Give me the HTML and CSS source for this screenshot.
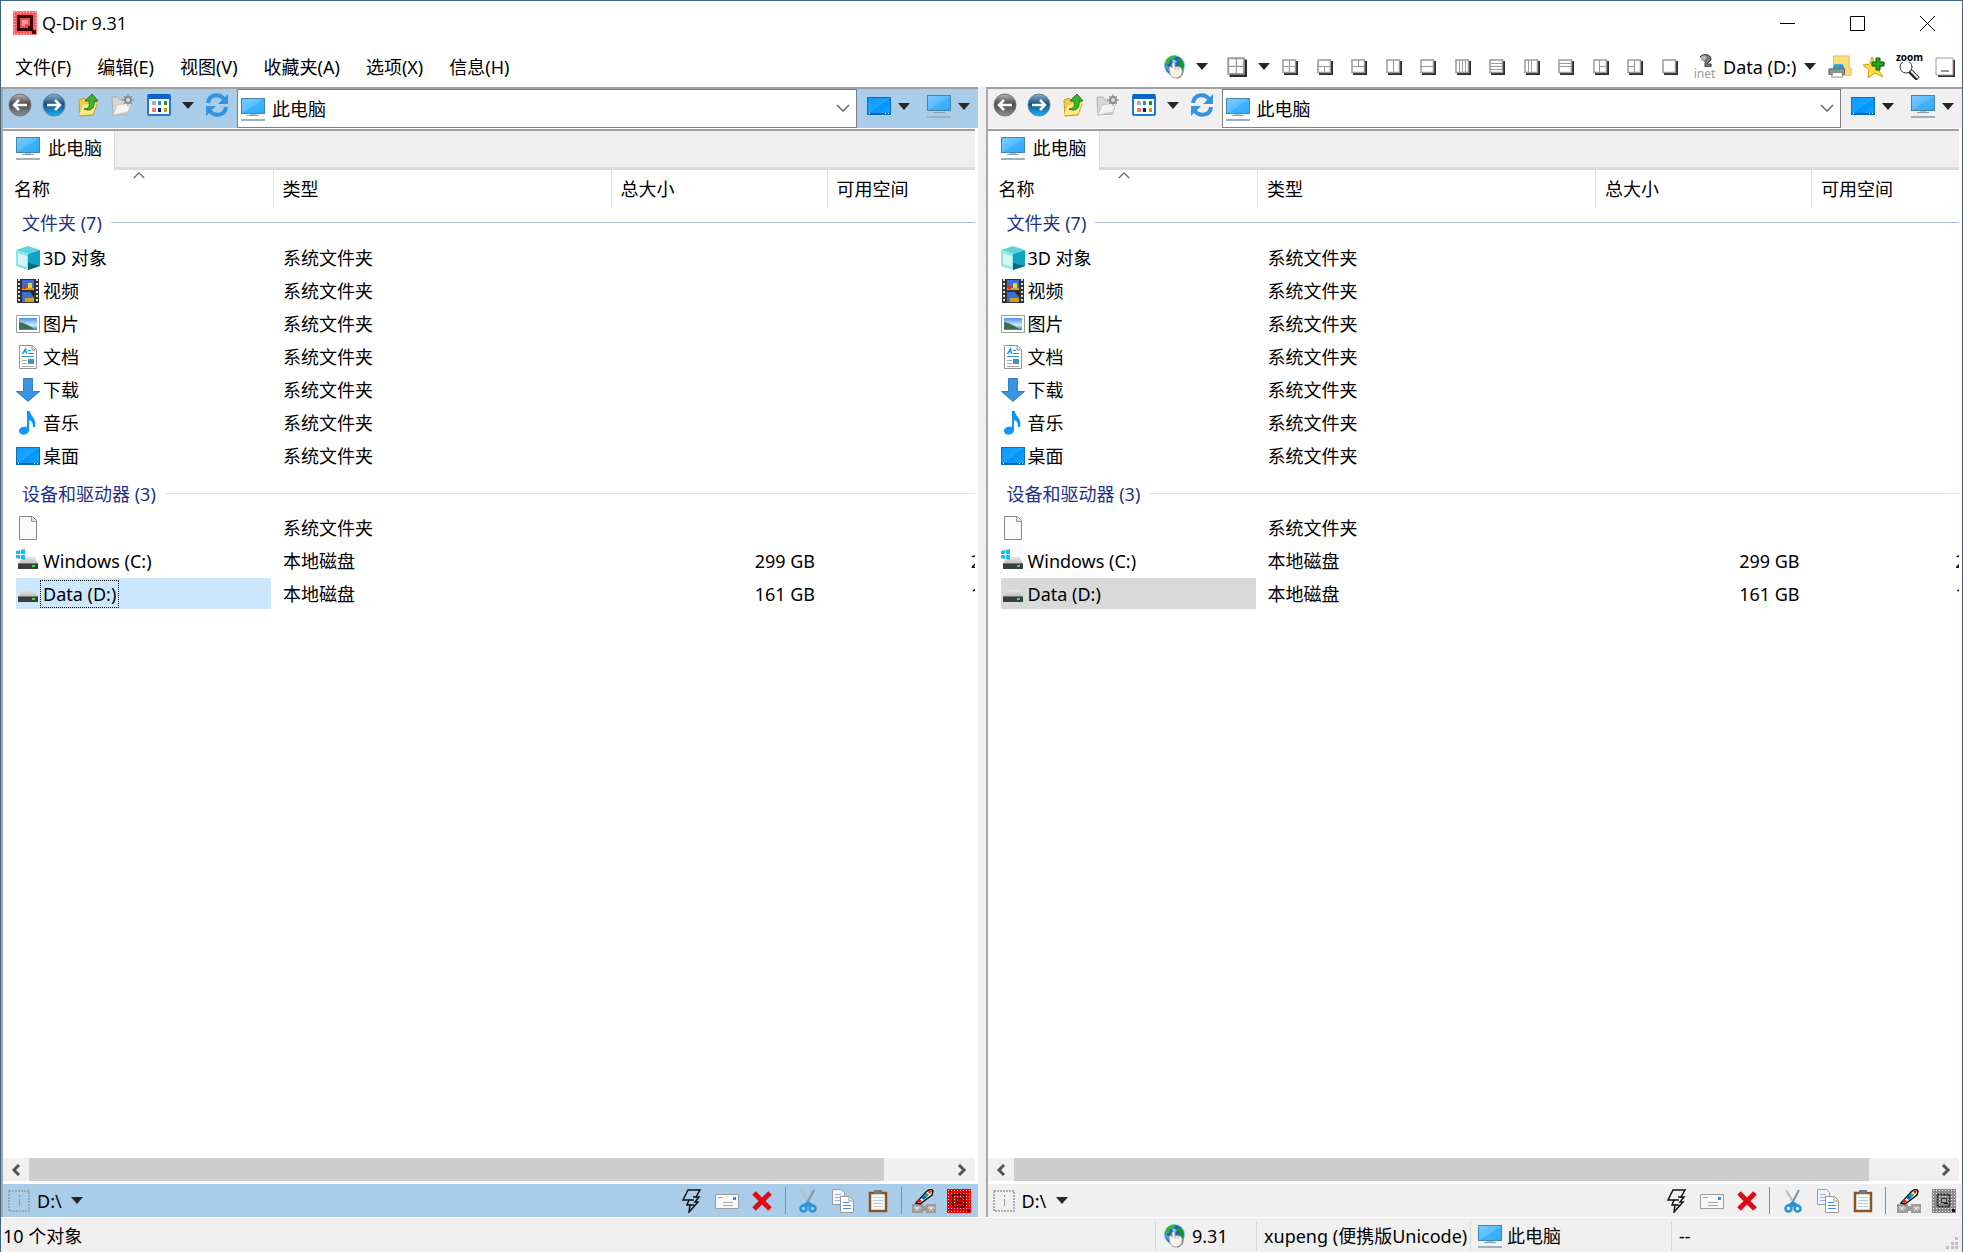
FILE: index.html
```html
<!DOCTYPE html>
<html lang="zh-CN">
<head>
    <meta charset="UTF-8">
    <meta name="viewport" content="width=device-width, initial-scale=1.0">
    <title>Q-Dir 9.31</title>
    <link rel="stylesheet" href="styles.css">
</head>
<body>
    <svg class="sprite" aria-hidden="true">
        <defs>
            <linearGradient id="gScreen" x1="0" y1="0" x2="1" y2="1">
                <stop offset="0" stop-color="#7ccbff"/><stop offset=".5" stop-color="#58bdff"/><stop offset=".52" stop-color="#3fb2ff"/><stop offset="1" stop-color="#2fa9fb"/>
            </linearGradient>
            <linearGradient id="gDesk" x1="0" y1="0" x2="1" y2="1">
                <stop offset="0" stop-color="#0a9bff"/><stop offset=".5" stop-color="#1aa3ff"/><stop offset=".52" stop-color="#0094fb"/><stop offset="1" stop-color="#1ba3ff"/>
            </linearGradient>
            <linearGradient id="gGrey" x1="0" y1="0" x2="0" y2="1">
                <stop offset="0" stop-color="#b5b5b5"/><stop offset=".45" stop-color="#4d4d4d"/><stop offset="1" stop-color="#8e8e8e"/>
            </linearGradient>
            <linearGradient id="gBlue" x1="0" y1="0" x2="0" y2="1">
                <stop offset="0" stop-color="#8fb3cf"/><stop offset=".45" stop-color="#17507c"/><stop offset="1" stop-color="#12b4ff"/>
            </linearGradient>
            <linearGradient id="gDrive" x1="0" y1="0" x2="0" y2="1">
                <stop offset="0" stop-color="#e6e6e6"/><stop offset="1" stop-color="#bdbdbd"/>
            </linearGradient>
            <linearGradient id="gSky" x1="0" y1="0" x2="0" y2="1">
                <stop offset="0" stop-color="#4c92e6"/><stop offset=".6" stop-color="#d4ecf8"/><stop offset="1" stop-color="#3a78a8"/>
            </linearGradient>
            <pattern id="pRed" width="3" height="3" patternUnits="userSpaceOnUse">
                <rect width="3" height="3" fill="#f00000"/><rect x="1" y="1" width="1" height="1" fill="#ffd0d0"/>
            </pattern>
            <pattern id="pPink" width="3" height="3" patternUnits="userSpaceOnUse">
                <rect width="3" height="3" fill="#ff5656"/><rect x="1" y="1" width="1" height="1" fill="#ffc4c4"/>
            </pattern>
            <pattern id="pGrey" width="3" height="3" patternUnits="userSpaceOnUse">
                <rect width="3" height="3" fill="#8c8c8c"/><rect x="1" y="1" width="1" height="1" fill="#eeeeee"/>
            </pattern>
        </defs>
        <symbol id="logo" viewBox="0 0 24 24">
            <rect x=".5" y=".5" width="23" height="23" fill="url(#pPink)" stroke="#f08080"/>
            <path d="M4 4h16v16H4z" fill="#3a0000"/><path d="M7 7h10v8h-2v2H7z" fill="#e85050"/><path d="M9 9h6v4h-3v2H9z" fill="#ff9a9a"/>
            <path d="M19 19h4v4h-4z" fill="#4a0000"/>
        </symbol>
        <symbol id="qred" viewBox="0 0 24 24">
            <rect x=".5" y=".5" width="23" height="23" fill="url(#pRed)" stroke="#f00000"/>
            <path d="M5.500 5.500h12v12h-12z" fill="none" stroke="#200000" stroke-width="2" stroke-dasharray="2 1"/>
            <path d="M9.500 9.500h5v4h-5z" fill="#f00000" stroke="#400000"/><path d="M12 14h4v1h-4zM20 20h3v3h-3z" fill="#400000"/>
        </symbol>
        <symbol id="qgrey" viewBox="0 0 24 24">
            <rect x=".5" y=".5" width="23" height="23" fill="url(#pGrey)" stroke="#888"/>
            <path d="M5.500 5.500h12v12h-12z" fill="none" stroke="#222" stroke-width="2" stroke-dasharray="2 1"/>
            <path d="M9.500 9.500h5v4h-5z" fill="#aaa" stroke="#333"/><path d="M12 14h4v1h-4zM20 20h3v3h-3z" fill="#111"/>
        </symbol>
        <symbol id="back" viewBox="0 0 24 24">
            <circle cx="12" cy="12" r="11" fill="url(#gGrey)" stroke="#777"/><path d="M11 7 6 12l5 5M7 12h12" fill="none" stroke="#fff" stroke-width="2.500"/>
        </symbol>
        <symbol id="forward" viewBox="0 0 24 24">
            <circle cx="12" cy="12" r="11" fill="url(#gBlue)" stroke="#5783a5"/><path d="m13 7 5 5-5 5M17 12H5" fill="none" stroke="#fff" stroke-width="2.500"/>
        </symbol>
        <symbol id="up" viewBox="0 0 24 24">
            <path d="M3 7 8 5l2 2 9 1 2 3-4 11-13 1z" fill="#f0cc4c" stroke="#c99a1e"/><path d="m3 22 4-10 14-2-4 11z" fill="#ffe88a"/>
            <path d="M8 16c5 0 6-3 5-8H9l7-7 6 7h-4c1 7-3 11-10 8z" fill="#3cb52c" stroke="#1c7d16"/>
        </symbol>
        <symbol id="newfolder" viewBox="0 0 24 24">
            <path d="M2 4h6l2 3h8v14L3 22z" fill="#d6d6d6" stroke="#b0b0b0"/><path d="m3 22 4-10 14-2-3 9z" fill="#f4f4f4" stroke="#cacaca"/>
            <circle cx="18" cy="7" r="3" fill="#ddd" stroke="#888" stroke-width="2"/><path d="M18 1v3M18 10v3M12 7h3M21 7h3M14 3l2 2M20 9l2 2M22 3l-2 2M16 9l-2 2" stroke="#888"/>
        </symbol>
        <symbol id="views" viewBox="0 0 24 24">
            <rect x="1" y="2" width="22" height="20" rx="1" fill="#fff" stroke="#1f78dc" stroke-width="2"/><path d="M1 1h22v5H1z" fill="#0a63cf"/>
            <path d="M5 8h4v4H5z" fill="#b3a5c4"/><path d="M11 8h3v4h-3z" fill="#2c8ae0"/><path d="M17 8h3v4h-3z" fill="#119a11"/><path d="M5 15h4v4H5z" fill="#ff7a5c"/><path d="M11 15h3v4h-3z" fill="#001d8a"/><path d="M17 15h3v4h-3z" fill="#d39a00"/>
        </symbol>
        <symbol id="refresh" viewBox="0 0 24 24">
            <path d="M3 10C4 1 15 0 19 6M21 14C20 23 9 24 5 18" fill="none" stroke="#3494e0" stroke-width="4"/><path d="M23 1v10H13zM1 23V13h10z" fill="#3494e0"/>
        </symbol>
        <symbol id="pc" viewBox="0 0 24 24">
            <rect x=".5" y="1.500" width="23" height="15" fill="url(#gScreen)" stroke="#4685a8"/><path d="M9 17h6v1H9z" fill="#b4c4cf"/><path d="M6 18h12v1H6z" fill="#8b9daa"/><path d="M0 22h24v2H0z" fill="#9fb1be"/>
        </symbol>
        <symbol id="desktop" viewBox="0 0 24 24">
            <rect x=".5" y="3.500" width="23" height="17" fill="url(#gDesk)" stroke="#0b6fb8"/><path d="M1 19h22v1H1z" fill="#075c9e"/><path d="M2 19h1v1H2zM18 19h1v1h-1zM21 19h1v1h-1z" fill="#fff"/>
        </symbol>
        <symbol id="globe" viewBox="0 0 24 24">
            <circle cx="11.500" cy="10.500" r="10" fill="#1c5fb4" stroke="#8cc4e8"/><path d="M3 5c2-3 6-5 10-4l-2 3-4 1-1 4-3 1z" fill="#35b83a"/><path d="M14 3c4 0 7 4 7 8l-2 4-3-3 1-4-3-2z" fill="#169a2c"/><path d="M2 10c3 0 4 2 4 6-2-1-4-3-4-6z" fill="#3f9ff0"/><path d="M9 5c2-1 4 0 5 2l-4 2z" fill="#7cc8f4"/>
            <path d="M6 13c0-2 3-2 3 0V9c0-2 3-2 3 0v3c3-1 6 0 7 2 1 5-2 9-6 9-5 0-7-4-7-10z" fill="#f8f3ef" stroke="#9a9a9a"/><path d="M20 14c1 5-2 9-6 9" fill="none" stroke="#777"/><path d="M12 12v3M15 12v3" stroke="#bbb"/>
        </symbol>
        <symbol id="caret" viewBox="0 0 12 7"><path d="M0 0h12L6 7z" fill="#262626"/></symbol>
        <symbol id="chev" viewBox="0 0 14 9"><path d="m1 1 6 6 6-6" fill="none" stroke="#666" stroke-width="1.500"/></symbol>

        <symbol id="box" viewBox="0 0 16 16"><path d="M2 2h14v14H2z" fill="#2c2c2c"/><path d="M1 1h12.500v12.500H1z" fill="#fff" stroke="#9a9a9a" stroke-width="1.500"/></symbol>
        <symbol id="quad" viewBox="0 0 16 16"><use href="#box"/><path d="M7.500 1v13M1 7.500h13" stroke="#9a9a9a"/></symbol>
        <symbol id="l2" viewBox="0 0 16 16"><use href="#box"/><path d="M7.500 8v6M1 7.500h13" stroke="#9a9a9a"/></symbol>
        <symbol id="l3" viewBox="0 0 16 16"><use href="#box"/><path d="M7.500 1v6M1 7.500h13" stroke="#9a9a9a"/></symbol>
        <symbol id="l4" viewBox="0 0 16 16"><use href="#box"/><path d="M7.500 1v13" stroke="#9a9a9a"/></symbol>
        <symbol id="l5" viewBox="0 0 16 16"><use href="#box"/><path d="M1 7.500h13" stroke="#9a9a9a"/></symbol>
        <symbol id="l6" viewBox="0 0 16 16"><use href="#box"/><path d="M4.500 1v13M7.500 1v13M10.500 1v13" stroke="#9a9a9a"/></symbol>
        <symbol id="l7" viewBox="0 0 16 16"><use href="#box"/><path d="M1 4.500h13M1 7.500h13M1 10.500h13" stroke="#9a9a9a"/></symbol>
        <symbol id="l8" viewBox="0 0 16 16"><use href="#box"/><path d="M4.500 1v13M7.500 1v13" stroke="#9a9a9a"/></symbol>
        <symbol id="l9" viewBox="0 0 16 16"><use href="#box"/><path d="M1 4.500h13M1 7.500h13" stroke="#9a9a9a"/></symbol>
        <symbol id="l10" viewBox="0 0 16 16"><use href="#box"/><path d="M6.500 1v13M7 7.500h7" stroke="#9a9a9a"/></symbol>
        <symbol id="l11" viewBox="0 0 16 16"><use href="#box"/><path d="M7.500 1v13M1 7.500h6" stroke="#9a9a9a"/></symbol>

        <symbol id="printer" viewBox="0 0 26 24">
            <path d="M6 0h17v13h2v8h-9L6 15z" fill="#fbdc7a" stroke="#e2bd4e"/><path d="M7 9h9l2 5H5z" fill="#2b8cff"/><path d="M8 10h4v4H7z" fill="#18c37a"/>
            <path d="M1 14h17v6H1z" fill="#8f9699" stroke="#5f6466"/><path d="M5 18h10l1 5H4z" fill="#fff" stroke="#888"/>
        </symbol>
        <symbol id="star" viewBox="0 0 24 24">
            <path d="m9 2 3 7 10-1-7 6 5 8-8-4-7 5 1-8-6-5 7-1z" fill="#ffdd3c" stroke="#d29b16"/><path d="M13 3h4v4h4v4h-4v4h-4v-4H9V7h4z" fill="#25a51d" stroke="#0d5f0c"/>
        </symbol>
        <symbol id="minbox" viewBox="0 0 20 20"><path d="M3 3h17v17H3z" fill="#333"/><path d="M1 1h17v17H1z" fill="#fff" stroke="#9a9a9a"/><path d="M6 13h8v2H6z" fill="#999"/></symbol>

        <symbol id="cube" viewBox="0 0 24 24">
            <path d="m12 0 12 4-12 4L0 4z" fill="#5ed3dc"/><path d="m0 4 12 4v16L0 20z" fill="#8fe5e6"/><path d="m2 7 9 3v11l-9-3z" fill="#d2f6f4"/><path d="m24 4-12 4v16l12-4z" fill="#0fa3c4"/><path d="m12 17 12 3-12 4z" fill="#066878"/>
        </symbol>
        <symbol id="video" viewBox="0 0 24 24">
            <path d="M1 0h22v24H1z" fill="#333"/><path d="M3 0v24M21 0v24" stroke="#ddd" stroke-width="2" stroke-dasharray="2 2"/><path d="M6 1h12v10H6zM6 13h12v10H6z" fill="#3c6ed4"/>
            <path d="M6 9h12v2H6zM9 19h9v4H9z" fill="#d4a017"/><path d="M12 4h4v5h-4z" fill="#f2d21b"/><path d="M7 7h3v3H7z" fill="#c83232"/><path d="M14 13h4v5z" fill="#222"/>
        </symbol>
        <symbol id="picture" viewBox="0 0 24 24">
            <path d="M.5 3.500h23v17H.5z" fill="#fff" stroke="#9c9c9c"/><path d="M3 6h18v12H3z" fill="url(#gSky)"/><path d="M3 10c6 1 11 4 15 7H3z" fill="#3c7050"/>
        </symbol>
        <symbol id="doc" viewBox="0 0 24 24">
            <path d="M3.500.5h13l4 4v19h-17z" fill="#fff" stroke="#949494"/><path d="M16 1v4h4" fill="#ddd" stroke="#949494"/><path d="m6.500 9 3-5 1 5" fill="none" stroke="#2197dc" stroke-width="1.500"/><path d="M12 5.500h3M12 8.500h6M6 11.500h12" stroke="#2197dc"/><path d="M6 15.500h5M6 18.500h5M6 21.500h12" stroke="#aaa"/><path d="M12 14h6v5h-6z" fill="#4295b8"/>
        </symbol>
        <symbol id="download" viewBox="0 0 24 24"><path d="M7.500.5h9v13h7L12 23.500.5 13.500h7z" fill="#3a94df" stroke="#2f80c7"/></symbol>
        <symbol id="music" viewBox="0 0 24 24"><path d="M11 0h3c0 5 7 7 5 16h-2c0-4-1-6-4-7v10c0 6-10 6-10 1 0-4 5-5 8-4z" fill="#0c98fb"/></symbol>
        <symbol id="file" viewBox="0 0 24 24"><path d="M3.500.5h13l4 4v19h-17z" fill="#fafafa" stroke="#858585"/><path d="M15.500 1v4.500H20" fill="#ddd" stroke="#999"/></symbol>
        <symbol id="drive" viewBox="0 0 24 24"><path d="M6 8h13l3 7H2z" fill="url(#gDrive)"/><path d="M2 14h20v6H2z" fill="#3d3d3d"/><path d="M2 14h20v1H2z" fill="#777"/><path d="M16 16h3v2h-3z" fill="#29ec3b"/></symbol>
        <symbol id="windrive" viewBox="0 0 24 24"><use href="#drive"/><path d="M0 2l4-1v4H0zM5 1l4-1v5H5zM0 6h4v4l-4-1zM5 6h4v5l-4-1z" fill="#14bdf0"/></symbol>

        <symbol id="info" viewBox="0 0 24 24"><path d="M2 2h20v20H2z" fill="none" stroke="#999" stroke-width="1.500" stroke-dasharray="2 1"/><path d="M12.500 6v2M12.500 10v7" stroke="#999"/></symbol>
        <symbol id="bolt" viewBox="0 0 24 24"><path d="M8 1h12l-4 7h3l-4 5h3L9 23l1-7H7l2-5H3z" fill="none" stroke="#111" stroke-width="1.500"/><path d="M9 11h5M13 8h4M10 16h4" stroke="#111" stroke-width="1.500"/></symbol>
        <symbol id="mail" viewBox="0 0 24 24"><path d="M.5 5.500h23v14H.5z" fill="#f8f8f8" stroke="#9c9c9c"/><path d="M3 8.500h5M8 13.500h10M8 16.500h10" stroke="#a7a7a7"/><path d="M18 8h3v3h-3z" fill="#2494ee"/></symbol>
        <symbol id="delete" viewBox="0 0 24 24"><path d="m4 4 16 16M20 4 4 20" stroke="#de0b17" stroke-width="5"/></symbol>
        <symbol id="cut" viewBox="0 0 24 24"><path d="m5 1 9 15" stroke="#bcbcbc" stroke-width="2"/><path d="m18 1-8 15" stroke="#7d93a8" stroke-width="2"/><circle cx="7.500" cy="19.500" r="3" fill="none" stroke="#2993d9" stroke-width="2.500"/><circle cx="16.500" cy="19.500" r="3" fill="none" stroke="#2993d9" stroke-width="2.500"/><path d="m6 16 6-4 6 4-6 2z" fill="#2993d9"/></symbol>
        <symbol id="copy" viewBox="0 0 24 24"><path d="M1.500.5h9l3 3v12h-12z" fill="#f4f6fb" stroke="#999"/><path d="M4 5.500h6M4 8.500h7M4 11.500h7" stroke="#8fb4ee"/><path d="M9.500 7.500h9l4 4v12h-13z" fill="#fff" stroke="#999"/><path d="M18 8v4h4" fill="none" stroke="#999"/><path d="M12 13.500h6M12 16.500h8M12 19.500h8" stroke="#3d8df0"/></symbol>
        <symbol id="paste" viewBox="0 0 24 24"><path d="M4 4h16v18H4z" fill="#fafcfd" stroke="#8a5424" stroke-width="2.500"/><path d="M8 1h8v4H8z" fill="#777"/><path d="M7 8.500h10M7 11.500h10M7 14.500h10M7 17.500h10" stroke="#bcd"/></symbol>
        <symbol id="pen" viewBox="0 0 24 24"><path d="M0 15h11v2h3v-2h10v9H14v-2h-3v2H0z" fill="#9b9b9b"/><path d="m3 17 4 5m0-5-4 5m-1-3h7M17 17l4 5m0-5-4 5m-1-3h7" stroke="#e8e8e8"/><path d="M4 14 15 2l4-2 2 2-1 4L8 15z" fill="#fff" stroke="#111" stroke-width="1.500"/><path d="m5 13 3 1 2-2-3-2z" fill="#e11"/><path d="m9 9 3 2 3-3-3-2z" fill="#16c"/><path d="m12 6 3 2 2-2-2-2z" fill="#1a5"/><path d="m16 3 2 2 2-3-2-1z" fill="#e22"/></symbol>
    </svg>

    <div class="window">
        <header class="titlebar">
            <svg class="icon"><use href="#logo"/></svg>
            <h1>Q-Dir 9.31</h1>
            <button class="win-btn" aria-label="最小化"><svg viewBox="0 0 16 16"><path d="M0 8.500h15"/></svg></button>
            <button class="win-btn" aria-label="最大化"><svg viewBox="0 0 16 16"><path d="M.5 1.500h14v14H.5z"/></svg></button>
            <button class="win-btn" aria-label="关闭"><svg viewBox="0 0 16 16"><path d="m0 1 15 15M15 1 0 16"/></svg></button>
        </header>

        <div class="menubar">
            <nav class="menu">
                <button>文件(F)</button>
                <button>编辑(E)</button>
                <button>视图(V)</button>
                <button>收藏夹(A)</button>
                <button>选项(X)</button>
                <button>信息(H)</button>
            </nav>
            <div class="main-tools">
                <button class="tool" aria-label="网络"><svg class="icon"><use href="#globe"/></svg></button>
                <button class="drop" aria-label="网络选项"><svg class="caret"><use href="#caret"/></svg></button>
                <button class="tool spaced" aria-label="布局"><svg class="icon-mid"><use href="#quad"/></svg></button>
                <button class="drop" aria-label="布局选项"><svg class="caret"><use href="#caret"/></svg></button>
                <div class="layouts">
                    <button aria-label="布局 1"><svg><use href="#quad"/></svg></button>
                    <button aria-label="布局 2"><svg><use href="#l2"/></svg></button>
                    <button aria-label="布局 3"><svg><use href="#l3"/></svg></button>
                    <button aria-label="布局 4"><svg><use href="#l4"/></svg></button>
                    <button aria-label="布局 5"><svg><use href="#l5"/></svg></button>
                    <button aria-label="布局 6"><svg><use href="#l6"/></svg></button>
                    <button aria-label="布局 7"><svg><use href="#l7"/></svg></button>
                    <button aria-label="布局 8"><svg><use href="#l8"/></svg></button>
                    <button aria-label="布局 9"><svg><use href="#l9"/></svg></button>
                    <button aria-label="布局 10"><svg><use href="#l10"/></svg></button>
                    <button aria-label="布局 11"><svg><use href="#l11"/></svg></button>
                    <button aria-label="布局 12"><svg><use href="#box"/></svg></button>
                </div>
                <button class="tool stack" aria-label="inet">
                    <svg class="icon-half" viewBox="0 0 24 13"><path d="M7 3c3-4 11-3 11 2 0 3-4 3-4 5h4v3h-6V9" fill="#777" stroke="#333"/><path d="M8 3c2-2 5-2 6 0l-2 3-4 1z" fill="#b5b5b5"/></svg>
                    <span class="inet-text">inet</span>
                </button>
                <label class="pick drive-pick">
                    <select aria-label="驱动器"><option>Data (D:)</option></select>
                    <svg class="caret"><use href="#caret"/></svg>
                </label>
                <button class="tool" aria-label="打印"><svg class="icon"><use href="#printer"/></svg></button>
                <button class="tool" aria-label="添加收藏"><svg class="icon"><use href="#star"/></svg></button>
                <button class="tool stack" aria-label="zoom">
                    <span class="zoom-text">zoom</span>
                    <svg class="icon-glass" viewBox="0 0 24 18"><circle cx="8" cy="5" r="6" fill="#fff" stroke="#333"/><path d="m12 9 8 8" stroke="#222" stroke-width="5"/><path d="m13 9 7 7" stroke="#eee" stroke-width="2"/></svg>
                </button>
                <button class="tool" aria-label="托盘"><svg class="icon-mid"><use href="#minbox"/></svg></button>
            </div>
        </div>

        <main class="panes">
            <section class="pane active">
                <div class="toolbar">
                    <button class="tool" aria-label="后退"><svg class="icon"><use href="#back"/></svg></button>
                    <button class="tool" aria-label="前进"><svg class="icon"><use href="#forward"/></svg></button>
                    <button class="tool" aria-label="向上"><svg class="icon"><use href="#up"/></svg></button>
                    <button class="tool" aria-label="新建文件夹"><svg class="icon"><use href="#newfolder"/></svg></button>
                    <button class="tool views" aria-label="查看"><svg class="icon"><use href="#views"/></svg></button>
                    <button class="drop" aria-label="查看选项"><svg class="caret"><use href="#caret"/></svg></button>
                    <button class="tool" aria-label="刷新"><svg class="icon"><use href="#refresh"/></svg></button>
                    <label class="address">
                        <svg class="icon"><use href="#pc"/></svg>
                        <select aria-label="地址"><option>此电脑</option></select>
                        <svg class="chev"><use href="#chev"/></svg>
                    </label>
                    <button class="place" aria-label="桌面"><svg class="icon"><use href="#desktop"/></svg><svg class="caret"><use href="#caret"/></svg></button>
                    <button class="place" aria-label="此电脑"><svg class="icon"><use href="#pc"/></svg><svg class="caret"><use href="#caret"/></svg></button>
                </div>
                <div class="tabs">
                    <button class="tab"><svg class="icon"><use href="#pc"/></svg>此电脑</button>
                </div>
                <div class="list">
                    <table>
                        <colgroup><col class="c-name"><col class="c-type"><col class="c-size"><col class="c-size"></colgroup>
                        <thead>
                            <tr>
                                <th class="sorted">名称<svg class="sort"><use href="#chev"/></svg></th>
                                <th>类型</th>
                                <th>总大小</th>
                                <th>可用空间</th>
                            </tr>
                        </thead>
                        <tbody>
                            <tr class="group"><th colspan="4"><div>文件夹 (7)</div></th></tr>
                            <tr><td><div class="name"><svg class="icon"><use href="#cube"/></svg><span>3D 对象</span></div></td><td>系统文件夹</td><td></td><td></td></tr>
                            <tr><td><div class="name"><svg class="icon"><use href="#video"/></svg><span>视频</span></div></td><td>系统文件夹</td><td></td><td></td></tr>
                            <tr><td><div class="name"><svg class="icon"><use href="#picture"/></svg><span>图片</span></div></td><td>系统文件夹</td><td></td><td></td></tr>
                            <tr><td><div class="name"><svg class="icon"><use href="#doc"/></svg><span>文档</span></div></td><td>系统文件夹</td><td></td><td></td></tr>
                            <tr><td><div class="name"><svg class="icon"><use href="#download"/></svg><span>下载</span></div></td><td>系统文件夹</td><td></td><td></td></tr>
                            <tr><td><div class="name"><svg class="icon"><use href="#music"/></svg><span>音乐</span></div></td><td>系统文件夹</td><td></td><td></td></tr>
                            <tr><td><div class="name"><svg class="icon"><use href="#desktop"/></svg><span>桌面</span></div></td><td>系统文件夹</td><td></td><td></td></tr>
                        </tbody>
                        <tbody>
                            <tr class="group devices"><th colspan="4"><div>设备和驱动器 (3)</div></th></tr>
                            <tr><td><div class="name"><svg class="icon"><use href="#file"/></svg></div></td><td>系统文件夹</td><td></td><td></td></tr>
                            <tr><td><div class="name"><svg class="icon"><use href="#windrive"/></svg><span>Windows (C:)</span></div></td><td>本地磁盘</td><td>299 GB</td><td>220 GB</td></tr>
                            <tr class="selected"><td><div class="name"><svg class="icon"><use href="#drive"/></svg><span>Data (D:)</span></div></td><td>本地磁盘</td><td>161 GB</td><td>120 GB</td></tr>
                        </tbody>
                    </table>
                </div>
                <div class="scrollbar">
                    <button aria-label="向左"><svg viewBox="0 0 10 12"><path d="M8 1 3 6l5 5"/></svg></button>
                    <div class="track"><div class="thumb"></div></div>
                    <button aria-label="向右"><svg viewBox="0 0 10 12"><path d="m2 1 5 5-5 5"/></svg></button>
                </div>
                <div class="footbar">
                    <button class="tool info" aria-label="信息"><svg class="icon"><use href="#info"/></svg></button>
                    <label class="pick path-pick">
                        <select aria-label="路径"><option>D:\</option></select>
                        <svg class="caret"><use href="#caret"/></svg>
                    </label>
                    <button class="tool" aria-label="快速"><svg class="icon"><use href="#bolt"/></svg></button>
                    <button class="tool" aria-label="邮件"><svg class="icon"><use href="#mail"/></svg></button>
                    <button class="tool" aria-label="删除"><svg class="icon"><use href="#delete"/></svg></button>
                    <span class="sep"></span>
                    <button class="tool" aria-label="剪切"><svg class="icon"><use href="#cut"/></svg></button>
                    <button class="tool" aria-label="复制"><svg class="icon"><use href="#copy"/></svg></button>
                    <button class="tool" aria-label="粘贴"><svg class="icon"><use href="#paste"/></svg></button>
                    <span class="sep"></span>
                    <button class="tool" aria-label="颜色过滤"><svg class="icon"><use href="#pen"/></svg></button>
                    <button class="tool" aria-label="Q-Dir"><svg class="icon"><use href="#qred"/></svg></button>
                </div>
            </section>

            <section class="pane">
                <div class="toolbar">
                    <button class="tool" aria-label="后退"><svg class="icon"><use href="#back"/></svg></button>
                    <button class="tool" aria-label="前进"><svg class="icon"><use href="#forward"/></svg></button>
                    <button class="tool" aria-label="向上"><svg class="icon"><use href="#up"/></svg></button>
                    <button class="tool" aria-label="新建文件夹"><svg class="icon"><use href="#newfolder"/></svg></button>
                    <button class="tool views" aria-label="查看"><svg class="icon"><use href="#views"/></svg></button>
                    <button class="drop" aria-label="查看选项"><svg class="caret"><use href="#caret"/></svg></button>
                    <button class="tool" aria-label="刷新"><svg class="icon"><use href="#refresh"/></svg></button>
                    <label class="address">
                        <svg class="icon"><use href="#pc"/></svg>
                        <select aria-label="地址"><option>此电脑</option></select>
                        <svg class="chev"><use href="#chev"/></svg>
                    </label>
                    <button class="place" aria-label="桌面"><svg class="icon"><use href="#desktop"/></svg><svg class="caret"><use href="#caret"/></svg></button>
                    <button class="place" aria-label="此电脑"><svg class="icon"><use href="#pc"/></svg><svg class="caret"><use href="#caret"/></svg></button>
                </div>
                <div class="tabs">
                    <button class="tab"><svg class="icon"><use href="#pc"/></svg>此电脑</button>
                </div>
                <div class="list">
                    <table>
                        <colgroup><col class="c-name"><col class="c-type"><col class="c-size"><col class="c-size"></colgroup>
                        <thead>
                            <tr>
                                <th class="sorted">名称<svg class="sort"><use href="#chev"/></svg></th>
                                <th>类型</th>
                                <th>总大小</th>
                                <th>可用空间</th>
                            </tr>
                        </thead>
                        <tbody>
                            <tr class="group"><th colspan="4"><div>文件夹 (7)</div></th></tr>
                            <tr><td><div class="name"><svg class="icon"><use href="#cube"/></svg><span>3D 对象</span></div></td><td>系统文件夹</td><td></td><td></td></tr>
                            <tr><td><div class="name"><svg class="icon"><use href="#video"/></svg><span>视频</span></div></td><td>系统文件夹</td><td></td><td></td></tr>
                            <tr><td><div class="name"><svg class="icon"><use href="#picture"/></svg><span>图片</span></div></td><td>系统文件夹</td><td></td><td></td></tr>
                            <tr><td><div class="name"><svg class="icon"><use href="#doc"/></svg><span>文档</span></div></td><td>系统文件夹</td><td></td><td></td></tr>
                            <tr><td><div class="name"><svg class="icon"><use href="#download"/></svg><span>下载</span></div></td><td>系统文件夹</td><td></td><td></td></tr>
                            <tr><td><div class="name"><svg class="icon"><use href="#music"/></svg><span>音乐</span></div></td><td>系统文件夹</td><td></td><td></td></tr>
                            <tr><td><div class="name"><svg class="icon"><use href="#desktop"/></svg><span>桌面</span></div></td><td>系统文件夹</td><td></td><td></td></tr>
                        </tbody>
                        <tbody>
                            <tr class="group devices"><th colspan="4"><div>设备和驱动器 (3)</div></th></tr>
                            <tr><td><div class="name"><svg class="icon"><use href="#file"/></svg></div></td><td>系统文件夹</td><td></td><td></td></tr>
                            <tr><td><div class="name"><svg class="icon"><use href="#windrive"/></svg><span>Windows (C:)</span></div></td><td>本地磁盘</td><td>299 GB</td><td>220 GB</td></tr>
                            <tr class="selected"><td><div class="name"><svg class="icon"><use href="#drive"/></svg><span>Data (D:)</span></div></td><td>本地磁盘</td><td>161 GB</td><td>120 GB</td></tr>
                        </tbody>
                    </table>
                </div>
                <div class="scrollbar">
                    <button aria-label="向左"><svg viewBox="0 0 10 12"><path d="M8 1 3 6l5 5"/></svg></button>
                    <div class="track"><div class="thumb"></div></div>
                    <button aria-label="向右"><svg viewBox="0 0 10 12"><path d="m2 1 5 5-5 5"/></svg></button>
                </div>
                <div class="footbar">
                    <button class="tool info" aria-label="信息"><svg class="icon"><use href="#info"/></svg></button>
                    <label class="pick path-pick">
                        <select aria-label="路径"><option>D:\</option></select>
                        <svg class="caret"><use href="#caret"/></svg>
                    </label>
                    <button class="tool" aria-label="快速"><svg class="icon"><use href="#bolt"/></svg></button>
                    <button class="tool" aria-label="邮件"><svg class="icon"><use href="#mail"/></svg></button>
                    <button class="tool" aria-label="删除"><svg class="icon"><use href="#delete"/></svg></button>
                    <span class="sep"></span>
                    <button class="tool" aria-label="剪切"><svg class="icon"><use href="#cut"/></svg></button>
                    <button class="tool" aria-label="复制"><svg class="icon"><use href="#copy"/></svg></button>
                    <button class="tool" aria-label="粘贴"><svg class="icon"><use href="#paste"/></svg></button>
                    <span class="sep"></span>
                    <button class="tool" aria-label="颜色过滤"><svg class="icon"><use href="#pen"/></svg></button>
                    <button class="tool" aria-label="Q-Dir"><svg class="icon"><use href="#qgrey"/></svg></button>
                </div>
            </section>
        </main>

        <footer class="statusbar">
            <span class="status-main">10 个对象</span>
            <span class="status-ver"><svg class="icon"><use href="#globe"/></svg>9.31</span>
            <span class="status-user">xupeng (便携版Unicode)</span>
            <span class="status-place"><svg class="icon"><use href="#pc"/></svg>此电脑</span>
            <span class="status-extra">--</span>
            <svg class="grip" viewBox="0 0 12 12"><path d="M9 0h3v3H9zM9 5h3v3H9zM9 9h3v3H9zM5 5h3v3H5zM5 9h3v3H5zM0 9h3v3H0z"/></svg>
        </footer>
    </div>
</body>
</html>
```

FILE: styles.css
```css
* {
    box-sizing: border-box;
}
body {
    margin: 0;
    font-family: "Noto Sans", "Noto Sans CJK SC", sans-serif;
    font-size: 18px;
    line-height: 24px;
    color: #000;
}
button, select {
    font: inherit;
    color: inherit;
    background: none;
    border: none;
    padding: 0;
    margin: 0;
}
select {
    appearance: none;
    outline: none;
}
svg {
    display: block;
    flex: none;
}
.sprite {
    position: absolute;
    width: 0;
    height: 0;
}
.window {
    display: flex;
    flex-direction: column;
    height: 100vh;
    background: #fff;
    border: 1px solid #3f6682;
    border-bottom: none;
}

/* Icons */
.icon {
    width: 24px;
    height: 24px;
}
.icon-mid {
    width: 20px;
    height: 20px;
}
.icon-half {
    width: 24px;
    height: 13px;
}
.icon-glass {
    width: 24px;
    height: 18px;
}
.caret {
    width: 12px;
    height: 7px;
}
.chev {
    width: 14px;
    height: 9px;
}
.inet-text {
    font-size: 12px;
    line-height: 13px;
    color: #999;
}
.zoom-text {
    font-size: 10px;
    line-height: 9px;
    font-weight: bold;
}

/* Title bar */
.titlebar {
    display: flex;
    align-items: center;
    height: 44px;
    padding: 0 2px 0 12px;
    gap: 5px;
}
.titlebar h1 {
    flex: 1;
    margin: 0;
    font-size: 18px;
    font-weight: normal;
    font-family: "Open Sans", sans-serif;
}
.win-btn {
    display: flex;
    align-items: center;
    justify-content: center;
    width: 65px;
    height: 44px;
}
.win-btn svg {
    width: 16px;
    height: 16px;
    fill: none;
    stroke: #000;
}

/* Menu */
.menubar {
    display: flex;
    justify-content: space-between;
    align-items: center;
    height: 42px;
    padding: 1px 0 0 14px;
}
.menu {
    display: flex;
    gap: 26px;
}
.main-tools, .layouts {
    display: flex;
    align-items: center;
}
.layouts {
    width: 414px;
}
.layouts button {
    flex: 1;
    display: flex;
    justify-content: center;
}
.layouts svg {
    width: 16px;
    height: 16px;
}
.tool {
    display: flex;
    align-items: center;
    justify-content: center;
    width: 35px;
    height: 32px;
}
.stack {
    flex-direction: column;
}
.spaced {
    margin-left: 8px;
}
.drop {
    display: flex;
    justify-content: center;
    width: 19px;
}
.pick {
    display: flex;
    align-items: center;
}
.drive-pick {
    width: 100px;
    gap: 7px;
    padding-left: 1px;
}

/* Panes */
.panes {
    display: flex;
    flex: 1;
    gap: 8px;
    min-height: 0;
    background: #f0f0f0;
}
.pane {
    display: flex;
    flex-direction: column;
    flex: 1;
    min-width: 0;
    background: #fff;
    border-top: 2px solid #a0a0a0;
    border-left: 2px solid #a8a8a8;
}
.toolbar {
    display: flex;
    height: 40px;
    background: #f0f0f0;
    border-bottom: 1px solid #fff;
}
.active .toolbar, .active .footbar {
    background: #a9cce8;
}
.toolbar .tool {
    width: 34px;
}
.toolbar .views {
    margin-left: 3px;
}
.toolbar .drop {
    width: 24px;
    padding-top: 13px;
}
.address {
    display: flex;
    align-items: center;
    flex: 1;
    gap: 7px;
    margin-left: 3px;
    padding: 0 6px 0 3px;
    background: #fff;
    border: 1px solid #808080;
}
.address select {
    flex: 1;
}
.place {
    display: flex;
    align-items: center;
    gap: 7px;
    width: 60px;
    height: 34px;
    padding-left: 9px;
}
.place:nth-last-child(2) {
    margin-left: 1px;
}
.tabs {
    display: flex;
    height: 41px;
    margin-right: 3px;
    background: #efefef;
    border-top: 2px solid #a0a0a0;
    border-bottom: 3px solid #dadada;
}
.tab {
    display: flex;
    align-items: center;
    gap: 8px;
    height: 39px;
    width: 112px;
    padding: 0 0 5px 13px;
    background: #fff;
    border-right: 1px solid #dadada;
}

/* File list */
.list {
    flex: 1;
    overflow: hidden;
    margin-right: 3px;
    padding-left: 2px;
}
table {
    width: 1038px;
    table-layout: fixed;
    border-collapse: collapse;
}
.c-name {
    width: 268px;
}
.c-type {
    width: 338px;
}
.c-size {
    width: 216px;
}
th {
    padding: 0 9px;
    font-weight: normal;
    text-align: left;
}
thead th {
    position: relative;
    height: 37px;
    border-right: 1px solid #e5e5e5;
}
.sort {
    position: absolute;
    top: 1px;
    left: 48%;
    width: 12px;
    height: 8px;
    transform: rotate(180deg);
}
td {
    height: 33px;
    padding: 0 0 0 10px;
}
td:nth-child(n+3) {
    padding: 0 12px 0 0;
    text-align: right;
}
.name {
    display: flex;
    align-items: center;
    height: 31px;
    margin: 0 2px 0 1px;
}
.name span {
    padding: 1px 2px;
    border: 1px solid transparent;
}
.group th {
    height: 34px;
    padding: 0 0 3px 17px;
    color: #1e3287;
}
.group div {
    display: flex;
    align-items: center;
    gap: 9px;
}
.group div::after {
    content: "";
    flex: 1;
    height: 1px;
    background: #adb9dc;
}
.group.devices th {
    height: 39px;
    padding: 4px 0 0 17px;
}
.devices div::after {
    background: #dce2f1;
}
.selected .name {
    background: #d9d9d9;
}
.active .selected .name {
    background: #cce8ff;
}
.active .selected span {
    border: 1px dotted #000;
}

/* Scrollbar */
.scrollbar {
    display: flex;
    height: 23px;
    margin: 0 3px 3px 0;
    background: #f0f0f0;
}
.scrollbar button {
    display: flex;
    align-items: center;
    justify-content: center;
    width: 26px;
}
.scrollbar svg {
    width: 10px;
    height: 12px;
    fill: none;
    stroke: #555;
    stroke-width: 3;
}
.track {
    flex: 1;
}
.thumb {
    width: 93%;
    height: 100%;
    background: #cdcdcd;
}

/* Bottom bars */
.footbar {
    display: flex;
    align-items: center;
    height: 33px;
    padding-right: 1px;
    background: #f0f0f0;
}
.footbar .info {
    width: 32px;
}
.path-pick {
    flex: 1;
    gap: 9px;
    padding-left: 2px;
}
.sep {
    width: 1px;
    height: 27px;
    margin: 0 5px;
    background: #8a8a8a;
}
.statusbar {
    position: relative;
    display: flex;
    align-items: center;
    height: 35px;
    padding-top: 2px;
    background: #f0f0f0;
    border-top: 1px solid #fff;
}
.statusbar span {
    display: flex;
    align-items: center;
    gap: 5px;
    height: 30px;
    padding-left: 7px;
    border-left: 1px solid #d7d7d7;
    white-space: nowrap;
}
.statusbar .status-main {
    flex: 1;
    padding-left: 2px;
    border: none;
}
.status-ver {
    width: 101px;
}
.status-user {
    width: 214px;
}
.status-place {
    width: 201px;
}
.status-extra {
    width: 291px;
}
.grip {
    position: absolute;
    right: 4px;
    bottom: 3px;
    width: 12px;
    height: 12px;
    fill: #bfbfbf;
}
```
